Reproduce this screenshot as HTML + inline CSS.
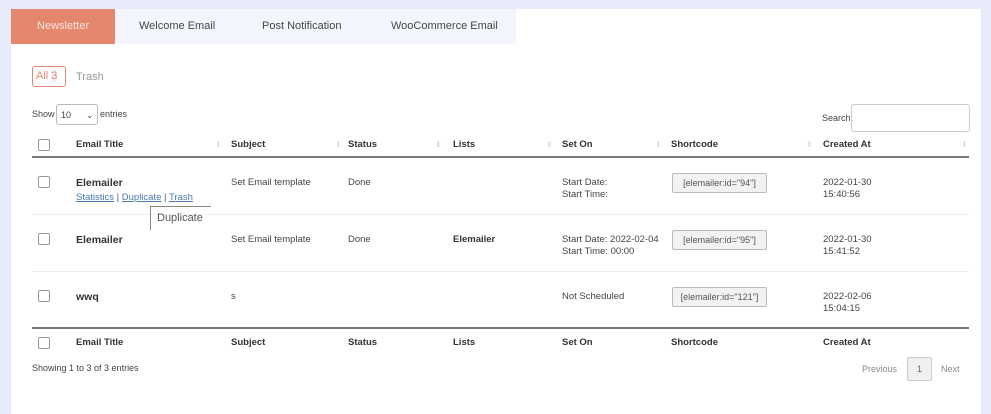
<!DOCTYPE html>
<html><head><style>
body{margin:0;width:991px;height:414px;background:#e7ebfa;font-family:"Liberation Sans",sans-serif;color:#444;position:relative;overflow:hidden}
.p{position:absolute;left:11px;top:9px;width:970px;height:405px;background:#fff}
.a{position:absolute;font-size:9.5px;white-space:nowrap}
.b{font-weight:bold;color:#333}
.cb{position:absolute;width:10px;height:10px;border:1px solid #999;border-radius:2px;background:#fff}
.ln{position:absolute;left:32px;width:937px;height:1px;background:#eee}
.dk{background:#777;height:2px}
.s{position:absolute;font-size:8px;color:#ddd}
.sc{position:absolute;width:93px;height:18px;border:1px solid #bbb;border-radius:2px;background:#f2f2f2;font-size:9px;text-align:center;line-height:18px;color:#555}
</style></head><body>
<div class="p"></div>
<div style="position:absolute;left:11px;top:9px;width:104px;height:35px;background:#e5876e;color:#fbe6df;font-size:11px;text-align:center;line-height:35px">Newsletter</div>
<div style="position:absolute;left:115px;top:9px;width:401px;height:35px;background:#f3f7fd;font-size:11px;line-height:35px;color:#444">
<span style="position:absolute;left:24px">Welcome Email</span><span style="position:absolute;left:147px">Post Notification</span><span style="position:absolute;left:276px">WooCommerce Email</span></div>
<div style="position:absolute;left:32px;top:66px;width:32px;height:19px;border:1px solid #e5876e;border-radius:3px;font-size:11px;line-height:19px;color:#e5876e;text-indent:3px">All <span style="background:#eef1fb">3</span></div>
<div class="a" style="left:76px;top:71px;font-size:11px;color:#999">Trash</div>
<div class="a" style="left:32px;top:109px;font-size:9px">Show</div>
<div style="position:absolute;left:56px;top:104px;width:40px;height:19px;border:1px solid #bbb;border-radius:3px;font-size:9px;line-height:20px;text-indent:4px">10 <span style="position:absolute;left:25px;top:0">⌄</span></div>
<div class="a" style="left:100px;top:109px;font-size:9px">entries</div>
<div class="a" style="left:822px;top:113px;font-size:9px">Search:</div>
<div style="position:absolute;left:851px;top:104px;width:117px;height:26px;border:1px solid #ccc;border-radius:3px"></div>

<div class="cb" style="left:38px;top:139px"></div>
<div class="a b" style="left:76px;top:139px">Email Title</div><div class="s" style="left:215px;top:140px">⬍</div>
<div class="a b" style="left:231px;top:139px">Subject</div><div class="s" style="left:335px;top:140px">⬍</div>
<div class="a b" style="left:348px;top:139px">Status</div><div class="s" style="left:435px;top:140px">⬍</div>
<div class="a b" style="left:453px;top:139px">Lists</div><div class="s" style="left:546px;top:140px">⬍</div>
<div class="a b" style="left:562px;top:139px">Set On</div><div class="s" style="left:655px;top:140px">⬍</div>
<div class="a b" style="left:671px;top:139px">Shortcode</div><div class="s" style="left:806px;top:140px">⬍</div>
<div class="a b" style="left:823px;top:139px">Created At</div><div class="s" style="left:961px;top:140px">⬍</div>
<div class="ln dk" style="top:156px"></div>

<div class="cb" style="left:38px;top:176px"></div>
<div class="a b" style="left:76px;top:177px;font-size:10.5px">Elemailer</div>
<div class="a" style="left:76px;top:192px;color:#4a78b0"><u>Statistics</u> <span style="color:#555">|</span> <u>Duplicate</u> <span style="color:#555">|</span> <u>Trash</u></div>
<div class="a" style="left:231px;top:177px">Set Email template</div>
<div class="a" style="left:348px;top:177px">Done</div>
<div class="a" style="left:562px;top:177px;line-height:12px">Start Date:<br>Start Time:</div>
<div class="sc" style="left:672px;top:173px">[elemailer:id="94"]</div>
<div class="a" style="left:823px;top:177px;line-height:12px">2022-01-30<br>15:40:56</div>
<div class="ln" style="top:214px"></div>
<div style="position:absolute;left:150px;top:206px;width:61px;height:1px;background:#888"></div>
<div style="position:absolute;left:150px;top:206px;width:1px;height:24px;background:#888"></div>
<div class="a" style="left:157px;top:212px;font-size:11px;color:#555">Duplicate</div>

<div class="cb" style="left:38px;top:233px"></div>
<div class="a b" style="left:76px;top:234px;font-size:10.5px">Elemailer</div>
<div class="a" style="left:231px;top:234px">Set Email template</div>
<div class="a" style="left:348px;top:234px">Done</div>
<div class="a b" style="left:453px;top:234px">Elemailer</div>
<div class="a" style="left:562px;top:234px;line-height:12px">Start Date: 2022-02-04<br>Start Time: 00:00</div>
<div class="sc" style="left:672px;top:230px">[elemailer:id="95"]</div>
<div class="a" style="left:823px;top:234px;line-height:12px">2022-01-30<br>15:41:52</div>
<div class="ln" style="top:271px"></div>

<div class="cb" style="left:38px;top:290px"></div>
<div class="a b" style="left:76px;top:291px;font-size:10.5px">wwq</div>
<div class="a" style="left:231px;top:291px">s</div>
<div class="a" style="left:562px;top:291px">Not Scheduled</div>
<div class="sc" style="left:672px;top:287px">[elemailer:id="121"]</div>
<div class="a" style="left:823px;top:291px;line-height:12px">2022-02-06<br>15:04:15</div>
<div class="ln dk" style="top:327px"></div>

<div class="cb" style="left:38px;top:337px"></div>
<div class="a b" style="left:76px;top:337px">Email Title</div>
<div class="a b" style="left:231px;top:337px">Subject</div>
<div class="a b" style="left:348px;top:337px">Status</div>
<div class="a b" style="left:453px;top:337px">Lists</div>
<div class="a b" style="left:562px;top:337px">Set On</div>
<div class="a b" style="left:671px;top:337px">Shortcode</div>
<div class="a b" style="left:823px;top:337px">Created At</div>
<div class="a" style="left:32px;top:363px;font-size:9px">Showing 1 to 3 of 3 entries</div>
<div class="a" style="left:862px;top:364px;font-size:9px;color:#888">Previous</div>
<div style="position:absolute;left:907px;top:357px;width:23px;height:22px;border:1px solid #ccc;border-radius:2px;background:#f0f0f0;font-size:9px;text-align:center;line-height:22px;color:#666">1</div>
<div class="a" style="left:941px;top:364px;font-size:9px;color:#888">Next</div>
</body></html>
